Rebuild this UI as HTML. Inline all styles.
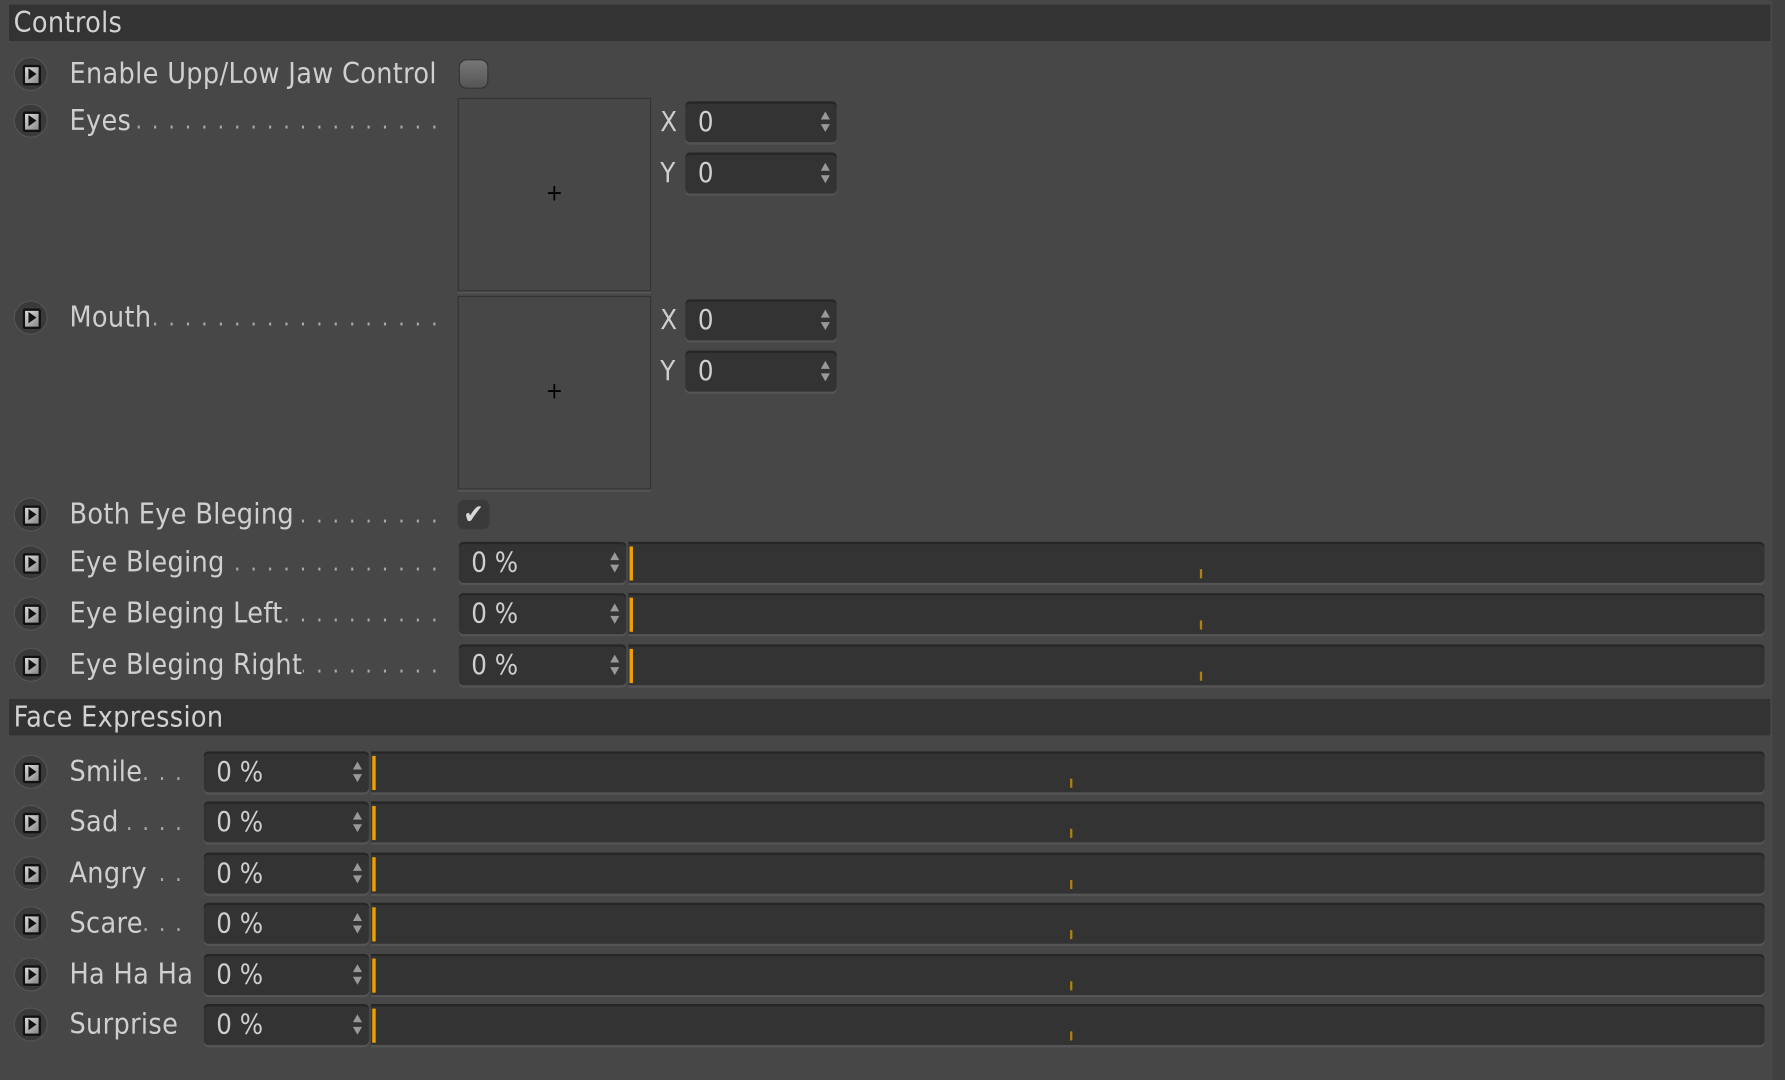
<!DOCTYPE html>
<html><head><meta charset="utf-8"><style>
html,body{margin:0;padding:0;background:#474747;width:1785px;height:1080px;overflow:hidden}
#w{position:absolute;left:0;top:0;width:1568px;height:949px;transform:scale(1.13839);transform-origin:0 0;font-family:"DejaVu Sans Condensed","Liberation Sans",sans-serif;color:#cfcfcf}
.a{position:absolute}
.hdr{position:absolute;left:8px;width:1547px;height:32px;background:#333;font-size:25px;line-height:32px;text-indent:4px;color:#d2d2d2;letter-spacing:.3px}
.ic{position:absolute;left:13px;width:28px;height:28px;border-radius:50%;background:#3a3a3a;box-shadow:0 0 0 1px #555}
.ic:after{content:"";position:absolute;left:7px;top:6px;width:12px;height:14px;border:2px solid #111;border-radius:2px;background:linear-gradient(135deg,#ddd,#888);}
.ic:before{content:"";position:absolute;left:12px;top:9px;border-left:7px solid #111;border-top:5px solid transparent;border-bottom:5px solid transparent;z-index:2}
.lb{position:absolute;left:61px;font-size:25px;letter-spacing:.3px;line-height:30px;white-space:nowrap;display:flex;width:325px}
.lb.s{width:100px}
.dt{color:#aaa;letter-spacing:1.5px;flex:1;overflow:hidden;font-size:20px;direction:rtl}
.fld{position:absolute;background:#333;border-radius:4px;box-shadow:inset 0 2px 0 #262626,0 2px 0 #555;font-size:24px;line-height:36px;height:36px;box-sizing:border-box;padding-left:11px}
.ar{position:absolute;right:6px;top:9px;width:8px;height:18px}
.ar:before{content:"";position:absolute;top:0;border-bottom:7px solid #999;border-left:4px solid transparent;border-right:4px solid transparent}
.ar:after{content:"";position:absolute;bottom:0;border-top:7px solid #999;border-left:4px solid transparent;border-right:4px solid transparent}
.sl{position:absolute;height:36px;background:#333;border-radius:0 4px 4px 0;box-shadow:inset 0 2px 0 #262626,0 2px 0 #555}
.sl i{position:absolute;left:1px;top:4px;width:3px;height:30px;background:#f0a000}
.sl b{position:absolute;bottom:4px;width:2px;height:8px;background:#b08010}
.box{position:absolute;left:402px;width:170px;height:170px;border:1px solid #333;box-sizing:border-box;background:#474747;box-shadow:0 2px 0 #555}
.box:after{content:"+";position:absolute;left:0;right:0;top:70px;text-align:center;color:#000;font-size:20px}
.xy{position:absolute;left:580px;font-size:24px}
</style></head><body><div id="w">
<div class="hdr" style="top:4px">Controls</div>

<div class="ic" style="top:51px"></div><div class="lb" style="top:50px;width:340px">Enable Upp/Low Jaw Control</div>
<div class="a" style="left:404px;top:53px;width:24px;height:24px;border-radius:6px;background:linear-gradient(#777,#555);box-shadow:0 0 0 1px #333"></div>

<div class="ic" style="top:92px"></div><div class="lb" style="top:91px">Eyes<span class="dt">. . . . . . . . . . . . . . . . . . . . . . . . . . . . . . . . . . . . .</span></div>
<div class="box" style="top:86px"></div>
<div class="xy" style="top:93px">X</div><div class="fld" style="left:602px;top:89px;width:133px">0<span class="ar"></span></div>
<div class="xy" style="top:138px">Y</div><div class="fld" style="left:602px;top:134px;width:133px">0<span class="ar"></span></div>

<div class="ic" style="top:265px"></div><div class="lb" style="top:264px">Mouth<span class="dt">. . . . . . . . . . . . . . . . . . . . . . . . . . . . . . . . . . . . .</span></div>
<div class="box" style="top:260px"></div>
<div class="xy" style="top:267px">X</div><div class="fld" style="left:602px;top:263px;width:133px">0<span class="ar"></span></div>
<div class="xy" style="top:312px">Y</div><div class="fld" style="left:602px;top:308px;width:133px">0<span class="ar"></span></div>

<div class="ic" style="top:438px"></div><div class="lb" style="top:437px">Both Eye Bleging<span class="dt">. . . . . . . . . . . . . . . . . . . . . . . . . . . . . . . . . . . . .</span></div>
<div class="a" style="left:402px;top:439px;width:28px;height:26px;border-radius:6px;background:#3a3a3a;font-size:24px;line-height:26px;color:#d8d8d8;text-align:center;font-style:italic">✔</div>

<div class="ic" style="top:480px"></div><div class="lb" style="top:479px">Eye Bleging<span class="dt">. . . . . . . . . . . . . . . . . . . . . . . . . . . . . . . . . . . . .</span></div>
<div class="fld" style="left:403px;top:476px;width:147px">0 %<span class="ar"></span></div>
<div class="sl" style="left:552px;top:476px;width:998px"><i></i><b style="left:502px"></b></div>

<div class="ic" style="top:525px"></div><div class="lb" style="top:524px">Eye Bleging Left<span class="dt">. . . . . . . . . . . . . . . . . . . . . . . . . . . . . . . . . . . . .</span></div>
<div class="fld" style="left:403px;top:521px;width:147px">0 %<span class="ar"></span></div>
<div class="sl" style="left:552px;top:521px;width:998px"><i></i><b style="left:502px"></b></div>

<div class="ic" style="top:570px"></div><div class="lb" style="top:569px">Eye Bleging Right<span class="dt">. . . . . . . . . . . . . . . . . . . . . . . . . . . . . . . . . . . . .</span></div>
<div class="fld" style="left:403px;top:566px;width:147px">0 %<span class="ar"></span></div>
<div class="sl" style="left:552px;top:566px;width:998px"><i></i><b style="left:502px"></b></div>

<div class="hdr" style="top:614px">Face Expression</div>

<div class="ic" style="top:664px"></div><div class="lb s" style="top:663px">Smile<span class="dt">. . . . . . . . . . . .</span></div>
<div class="fld" style="left:179px;top:660px;width:145px">0 %<span class="ar"></span></div>
<div class="sl" style="left:326px;top:660px;width:1224px"><i></i><b style="left:614px"></b></div>

<div class="ic" style="top:708px"></div><div class="lb s" style="top:707px">Sad<span class="dt">. . . . . . . . . . . .</span></div>
<div class="fld" style="left:179px;top:704px;width:145px">0 %<span class="ar"></span></div>
<div class="sl" style="left:326px;top:704px;width:1224px"><i></i><b style="left:614px"></b></div>

<div class="ic" style="top:753px"></div><div class="lb s" style="top:752px">Angry<span class="dt">. . . . . . . . . . . .</span></div>
<div class="fld" style="left:179px;top:749px;width:145px">0 %<span class="ar"></span></div>
<div class="sl" style="left:326px;top:749px;width:1224px"><i></i><b style="left:614px"></b></div>

<div class="ic" style="top:797px"></div><div class="lb s" style="top:796px">Scare<span class="dt">. . . . . . . . . . . .</span></div>
<div class="fld" style="left:179px;top:793px;width:145px">0 %<span class="ar"></span></div>
<div class="sl" style="left:326px;top:793px;width:1224px"><i></i><b style="left:614px"></b></div>

<div class="ic" style="top:842px"></div><div class="lb s" style="top:841px;width:115px">Ha Ha Ha</div>
<div class="fld" style="left:179px;top:838px;width:145px">0 %<span class="ar"></span></div>
<div class="sl" style="left:326px;top:838px;width:1224px"><i></i><b style="left:614px"></b></div>

<div class="ic" style="top:886px"></div><div class="lb s" style="top:885px">Surprise</div>
<div class="fld" style="left:179px;top:882px;width:145px">0 %<span class="ar"></span></div>
<div class="sl" style="left:326px;top:882px;width:1224px"><i></i><b style="left:614px"></b></div>

<div class="a" style="left:1557px;top:0;width:11px;height:949px;background:#404040"></div>
</div></body></html>
